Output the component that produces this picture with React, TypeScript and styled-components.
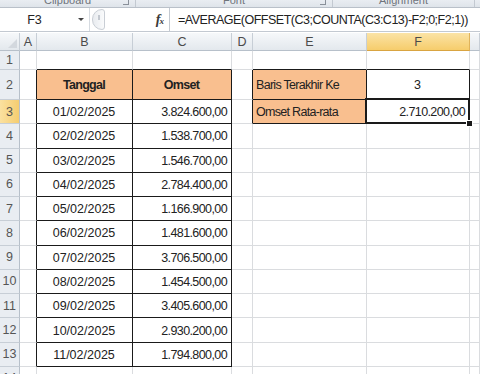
import React from "react";
import styled, { createGlobalStyle, css } from "styled-components";

const GlobalStyle = createGlobalStyle`
  html, body { margin: 0; padding: 0; background: #fff; }
  body { font-family: "Liberation Sans", Arial, sans-serif; color: #222; }
`;

// sheet geometry
const COLS = [20, 17, 96, 99, 21, 114, 103, 10];
const LETTERS = ["", "A", "B", "C", "D", "E", "F", "G"];
const ROWS = [18, 19, 30, ...Array(11).fill(24.27), 24];

type Box = { r1: number; r2: number; c1: number; c2: number };
const boxes: Box[] = [
  { r1: 2, r2: 13, c1: 2, c2: 3 },
  { r1: 2, r2: 3, c1: 5, c2: 6 },
];
const inBox = (r: number, c: number) =>
  boxes.some((b) => r >= b.r1 && r <= b.r2 && c >= b.c1 && c <= b.c2);

const omset = [
  "3.824.600,00",
  "1.538.700,00",
  "1.546.700,00",
  "2.784.400,00",
  "1.166.900,00",
  "1.481.600,00",
  "3.706.500,00",
  "1.454.500,00",
  "3.405.600,00",
  "2.930.200,00",
  "1.794.800,00",
];

type Kind = "text" | "date" | "num";
type CellData = {
  text?: string;
  align?: "left" | "center" | "right";
  bold?: boolean;
  fill?: boolean;
  kind?: Kind;
};

const cellAt = (r: number, c: number): CellData => {
  if (r === 2) {
    if (c === 2) return { text: "Tanggal", align: "center", bold: true, fill: true };
    if (c === 3) return { text: "Omset", align: "center", bold: true, fill: true };
    if (c === 5) return { text: "Baris Terakhir Ke", align: "left", fill: true };
    if (c === 6) return { text: "3", align: "center", kind: "date" };
  }
  if (r === 3) {
    if (c === 5) return { text: "Omset Rata-rata", align: "left", fill: true };
    if (c === 6) return { text: "2.710.200,00", align: "right", kind: "num" };
  }
  if (r >= 3 && r <= 13) {
    const i = r - 3;
    if (c === 2)
      return {
        text: `${String(i + 1).padStart(2, "0")}/02/2025`,
        align: "center",
        kind: "date",
      };
    if (c === 3) return { text: omset[i], align: "right", kind: "num" };
  }
  return {};
};

const spacing: Record<Kind, string> = {
  text: "-0.7px",
  date: "0px",
  num: "-0.6px",
};

const Page = styled.div`
  width: 480px;
  height: 374px;
  overflow: hidden;
  background: #fff;
`;

const RibbonStrip = styled.div`
  display: flex;
  height: 7px;
  background: linear-gradient(#e9edf2, #dfe4ea);
  border-bottom: 1px solid #b9c0c9;
  overflow: hidden;
`;

const RibbonGroup = styled.div<{ $w: number }>`
  position: relative;
  flex: 0 0 ${(p) => p.$w}px;
  display: flex;
  justify-content: center;
  border-right: 1px solid #c3c9d1;
  overflow: hidden;
`;

const GroupLabel = styled.span`
  font-size: 11px;
  line-height: 12px;
  margin-top: -6px;
  color: #6f747b;
`;

const Launcher = styled.span`
  position: absolute;
  right: 6px;
  top: 0;
  width: 5px;
  height: 4px;
  border-right: 1px solid #8a9099;
  border-bottom: 1px solid #8a9099;
`;

const FormulaBar = styled.div`
  display: flex;
  align-items: stretch;
  height: 23px;
  border-bottom: 1px solid #c3c9d1;
  background: #fff;
`;

const NameBox = styled.div`
  position: relative;
  flex: 0 0 90px;
  display: flex;
  align-items: center;
  justify-content: center;
  padding-right: 20px;
  box-sizing: border-box;
  font-size: 12.5px;
  color: #222;
  border-right: 1px solid #d6dbe1;
`;

const DropArrow = styled.span`
  position: absolute;
  right: 5px;
  top: 10px;
  width: 0;
  height: 0;
  border-left: 3px solid transparent;
  border-right: 3px solid transparent;
  border-top: 3px solid #444;
`;

const Middle = styled.div`
  flex: 0 0 79px;
  display: flex;
  align-items: center;
  justify-content: space-between;
  padding: 0 6px 0 2px;
  box-sizing: border-box;
  background: #fff;
`;

const Grabber = styled.span`
  position: relative;
  width: 11px;
  height: 19px;
  border-radius: 10px 3px 3px 10px;
  border: 1px solid #c9ced5;
  background: linear-gradient(90deg, #e8ebef, #fafbfc);
  &::after {
    content: "";
    position: absolute;
    left: 5px;
    top: 5px;
    width: 2px;
    height: 5px;
    background: #c3c8cf;
  }
`;

const Fx = styled.span`
  font-family: "Liberation Serif", "Times New Roman", serif;
  font-style: italic;
  font-weight: bold;
  font-size: 14px;
  color: #3a3a3a;
  letter-spacing: -1px;
  small {
    font-size: 9px;
  }
`;

const FormulaInput = styled.div`
  flex: 1;
  display: flex;
  align-items: center;
  padding-left: 8px;
  border-left: 1px solid #c3c9d1;
  font-size: 12.5px;
  letter-spacing: -0.5px;
  white-space: nowrap;
  color: #222;
  overflow: hidden;
`;

const Sheet = styled.div`
  margin-top: 1px;
  display: grid;
  grid-template-columns: ${COLS.map((w) => `${w}px`).join(" ")};
  grid-template-rows: ${ROWS.map((h) => `${h}px`).join(" ")};
`;

const ColHead = styled.div<{ $sel?: boolean }>`
  display: flex;
  align-items: center;
  justify-content: center;
  font-size: 12.5px;
  color: #4a4a4a;
  border-right: 1px solid #c7ced6;
  border-bottom: 1px solid #b7c0ca;
  box-sizing: border-box;
  background: ${(p) =>
    p.$sel
      ? "linear-gradient(#fbe3a6, #f6cd6c)"
      : "linear-gradient(#f6f8fa, #e3e8ed)"};
  ${(p) =>
    p.$sel &&
    css`
      border-right-color: #e0b35a;
      border-bottom-color: #d9a441;
    `}
`;

const Corner = styled(ColHead)`
  position: relative;
  &::after {
    content: "";
    position: absolute;
    right: 2px;
    bottom: 2px;
    border-left: 9px solid transparent;
    border-bottom: 9px solid #d3d8de;
  }
`;

const RowHead = styled.div<{ $sel?: boolean }>`
  display: flex;
  align-items: center;
  justify-content: center;
  font-size: 12.5px;
  color: #555;
  box-sizing: border-box;
  border-right: 1px solid #b7c0ca;
  border-bottom: 1px solid #c7ced6;
  background: ${(p) =>
    p.$sel ? "linear-gradient(90deg, #fbe1a0, #f5cd70)" : "#e9edf2"};
`;

const Cell = styled.div<{
  $align: "left" | "center" | "right";
  $bold?: boolean;
  $fill?: boolean;
  $kind: Kind;
  $right: boolean;
  $bottom: boolean;
  $sel?: boolean;
}>`
  position: relative;
  display: flex;
  align-items: center;
  justify-content: ${(p) =>
    p.$align === "left" ? "flex-start" : p.$align === "right" ? "flex-end" : "center"};
  padding: 1px 4px 0 3px;
  box-sizing: border-box;
  font-size: 12.5px;
  letter-spacing: ${(p) => spacing[p.$kind]};
  font-weight: ${(p) => (p.$bold ? 700 : 400)};
  color: #222;
  white-space: nowrap;
  background: ${(p) => (p.$fill ? "#f9bf8f" : "#fff")};
  border-right: 1px solid ${(p) => (p.$right ? "#1a1a1a" : "#dadcdf")};
  border-bottom: 1px solid ${(p) => (p.$bottom ? "#1a1a1a" : "#dadcdf")};
  ${(p) =>
    p.$sel &&
    css`
      &::after {
        content: "";
        position: absolute;
        left: -2px;
        top: -2px;
        right: -1px;
        bottom: -1px;
        border: 2px solid #1a1a1a;
        pointer-events: none;
      }
    `}
`;

const FillHandle = styled.span`
  position: absolute;
  right: -4px;
  bottom: -4px;
  width: 5px;
  height: 5px;
  background: #1a1a1a;
  border: 1px solid #fff;
  z-index: 2;
`;

const App: React.FC = () => {
  const bodyRows = ROWS.length - 1;
  return (
    <Page>
      <GlobalStyle />
      <RibbonStrip>
        <RibbonGroup $w={135}>
          <GroupLabel>Clipboard</GroupLabel>
          <Launcher />
        </RibbonGroup>
        <RibbonGroup $w={196}>
          <GroupLabel>Font</GroupLabel>
          <Launcher />
        </RibbonGroup>
        <RibbonGroup $w={141}>
          <GroupLabel>Alignment</GroupLabel>
        </RibbonGroup>
      </RibbonStrip>
      <FormulaBar>
        <NameBox>
          F3
          <DropArrow />
        </NameBox>
        <Middle>
          <Grabber />
          <Fx>
            f<small>x</small>
          </Fx>
        </Middle>
        <FormulaInput>=AVERAGE(OFFSET(C3;COUNTA(C3:C13)-F2;0;F2;1))</FormulaInput>
      </FormulaBar>
      <Sheet>
        {LETTERS.map((l, c) =>
          c === 0 ? <Corner key="corner" /> : (
            <ColHead key={l} $sel={l === "F"}>
              {l === "G" ? "" : l}
            </ColHead>
          )
        )}
        {Array.from({ length: bodyRows }, (_, i) => {
          const r = i + 1;
          return (
            <React.Fragment key={r}>
              <RowHead $sel={r === 3}>{r}</RowHead>
              {LETTERS.slice(1).map((_, j) => {
                const c = j + 1;
                const d = cellAt(r, c);
                const sel = r === 3 && c === 6;
                return (
                  <Cell
                    key={c}
                    $align={d.align ?? "left"}
                    $bold={d.bold}
                    $fill={d.fill}
                    $kind={d.kind ?? "text"}
                    $right={inBox(r, c) || inBox(r, c + 1)}
                    $bottom={inBox(r, c) || inBox(r + 1, c)}
                    $sel={sel}
                  >
                    {d.text}
                    {sel && <FillHandle />}
                  </Cell>
                );
              })}
            </React.Fragment>
          );
        })}
      </Sheet>
    </Page>
  );
};

export default App;
